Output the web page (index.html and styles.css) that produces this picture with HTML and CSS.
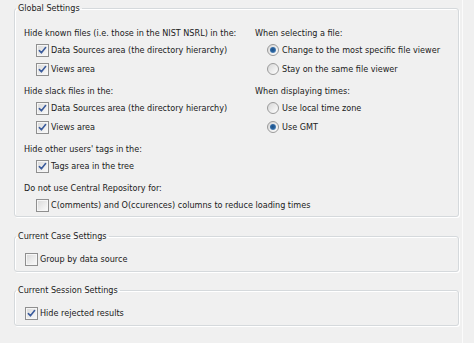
FILE: index.html
```html
<!DOCTYPE html>
<html>
<head>
<meta charset="utf-8">
<link rel="stylesheet" href="styles.css">
</head>
<body>
<div class="panel">
  <fieldset class="group">
    <legend>Global Settings</legend>
    <div class="body global">
      <div class="col left">
        <div class="section">
          <div class="label">Hide known files (i.e. those in the NIST NSRL) in the:</div>
          <div class="opt"><span class="cb on"><svg viewBox="0 0 13 13"><path d="M3.4 6.6 L5.4 8.8 L9.6 3.6"/></svg></span>Data Sources area (the directory hierarchy)</div>
          <div class="opt"><span class="cb on"><svg viewBox="0 0 13 13"><path d="M3.4 6.6 L5.4 8.8 L9.6 3.6"/></svg></span>Views area</div>
        </div>
        <div class="section">
          <div class="label">Hide slack files in the:</div>
          <div class="opt"><span class="cb on"><svg viewBox="0 0 13 13"><path d="M3.4 6.6 L5.4 8.8 L9.6 3.6"/></svg></span>Data Sources area (the directory hierarchy)</div>
          <div class="opt"><span class="cb on"><svg viewBox="0 0 13 13"><path d="M3.4 6.6 L5.4 8.8 L9.6 3.6"/></svg></span>Views area</div>
        </div>
        <div class="section">
          <div class="label">Hide other users' tags in the:</div>
          <div class="opt"><span class="cb on"><svg viewBox="0 0 13 13"><path d="M3.4 6.6 L5.4 8.8 L9.6 3.6"/></svg></span>Tags area in the tree</div>
        </div>
        <div class="section">
          <div class="label">Do not use Central Repository for:</div>
          <div class="opt"><span class="cb"></span>C(omments) and O(ccurences) columns to reduce loading times</div>
        </div>
      </div>
      <div class="col right">
        <div class="section">
          <div class="label">When selecting a file:</div>
          <div class="opt"><span class="rb on"></span>Change to the most specific file viewer</div>
          <div class="opt"><span class="rb"></span>Stay on the same file viewer</div>
        </div>
        <div class="section">
          <div class="label">When displaying times:</div>
          <div class="opt"><span class="rb"></span>Use local time zone</div>
          <div class="opt"><span class="rb on"></span>Use GMT</div>
        </div>
      </div>
    </div>
  </fieldset>
  <fieldset class="group small">
    <legend>Current Case Settings</legend>
    <div class="body single">
      <div class="opt"><span class="cb"></span>Group by data source</div>
    </div>
  </fieldset>
  <fieldset class="group small second">
    <legend>Current Session Settings</legend>
    <div class="body single">
      <div class="opt"><span class="cb on"><svg viewBox="0 0 13 13"><path d="M3.4 6.6 L5.4 8.8 L9.6 3.6"/></svg></span>Hide rejected results</div>
    </div>
  </fieldset>
</div>
</body>
</html>
```
FILE: styles.css
```css
html, body {
  margin: 0;
  padding: 0;
  background: #f0f0f0;
}
body {
  width: 474px;
  height: 343px;
  overflow: hidden;
  font-family: "DejaVu Sans Condensed", "DejaVu Sans", sans-serif;
  font-stretch: condensed;
  font-size: 9px;
  color: #202020;
}
.panel {
  padding: 1px 0 0 14px;
  width: 448px;
  height: 342px;
  border-right: 1px solid #fbfbfb;
}
.group {
  margin: 0;
  padding: 0;
  width: 445px;
  box-sizing: border-box;
  border: 1px solid #d5d9dc;
  border-radius: 3px;
  box-shadow: inset 1px 1px 0 #ffffff, 1px 1px 0 #ffffff;
  min-width: 0;
}
.group legend {
  margin-left: 1px;
  padding: 0 2px;
  line-height: 14px;
  height: 14px;
}
.small {
  margin-top: 12px;
}
.small.second {
  margin-top: 11px;
}
.body.global {
  display: flex;
  padding: 11px 0 3px 9px;
}
.col {
  display: flex;
  flex-direction: column;
  gap: 7px;
}
.col.left {
  width: 231px;
}
.section {
  display: flex;
  flex-direction: column;
  gap: 3px;
}
.label {
  height: 14px;
  line-height: 14px;
  white-space: nowrap;
  margin-bottom: -1px;
}
.opt {
  height: 16px;
  display: flex;
  align-items: center;
  white-space: nowrap;
  padding-left: 12px;
}
.body.single {
  padding: 8px 0 4px 10px;
}
.body.single .opt {
  padding-left: 0;
}
.cb {
  width: 13px;
  height: 13px;
  box-sizing: border-box;
  border: 1px solid #8f8f8f;
  background: linear-gradient(135deg, #d8d8d8 0%, #ececec 55%, #fbfbfb 100%);
  box-shadow: inset 0 0 0 1px #f6f6f6;
  margin-right: 2px;
  flex: none;
  position: relative;
}
.cb svg {
  position: absolute;
  left: -1px;
  top: -1px;
  width: 13px;
  height: 13px;
}
.cb svg path {
  fill: none;
  stroke: #3a5b9c;
  stroke-width: 1.6;
  stroke-linecap: round;
  stroke-linejoin: round;
}
.rb {
  width: 12px;
  height: 12px;
  box-sizing: border-box;
  border-radius: 50%;
  border: 1px solid #9a9a9a;
  background: linear-gradient(135deg, #d6d6d6 0%, #efefef 60%, #ffffff 100%);
  margin-right: 3px;
  flex: none;
  position: relative;
}
.rb.on::after {
  content: "";
  position: absolute;
  left: 2px;
  top: 2px;
  width: 6px;
  height: 6px;
  border-radius: 50%;
  background: radial-gradient(circle at 45% 45%, #1d4f86 0%, #2a64a0 45%, #8fb7dd 100%);
}
```
